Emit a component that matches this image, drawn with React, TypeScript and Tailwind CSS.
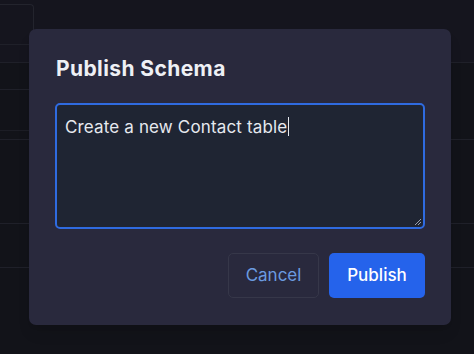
export default function App() {
  return (
    <div
      className="relative h-[354px] w-[474px] overflow-hidden bg-[#121319]"
      style={{ fontFamily: "Inter, 'Noto Sans', sans-serif" }}
    >
      {/* dimmed app behind the dialog */}
      <div className="flex h-full flex-col">
        <div className="relative h-[63px] border-b border-[#1f2029] bg-[#15151e]">
          <div className="h-[30px] w-[34px] mt-[4px] rounded-tr-[4px] border-t border-r border-[#23242d]" />
          <div className="mt-[10px] w-[34px] border-b border-[#1f2029]" />
        </div>
        <div className="h-[27px] w-[34px] border-b border-[#1f2029]" />
        <div className="h-[41px] w-[34px] border-b border-[#1c1d25]" />
        <div className="h-[9px] border-b border-[#1f2029]" />
        <div className="h-[84px] border-b border-[#1f2029]" />
        <div className="h-[44px] border-b border-[#1f2029]" />
        <div className="flex-1" />
      </div>

      {/* dialog */}
      <div className="absolute left-[29px] top-[29px] flex h-[296px] w-[422px] flex-col rounded-[7px] bg-[#29293d] px-[26px] pb-[27px] pt-[26px] shadow-lg">
        <h2 className="ml-px text-[21px] font-bold leading-[28px] tracking-[0.4px] text-[#eef0f5]">
          Publish Schema
        </h2>
        <div className="relative mt-[20px] h-[126px] rounded-[5px] border-2 border-[#2f6be0] bg-[#1f2533] px-[8px] py-[9px]">
          <span className="text-[17px] leading-[24px] tracking-[0.15px] text-[#e6e9ef]">
            Create a new Contact table
            <span className="ml-px inline-block h-[19px] w-px translate-y-[3px] bg-[#e6e9ef]" />
          </span>
          <svg
            className="absolute bottom-[1px] right-[1px]"
            width="8"
            height="8"
            viewBox="0 0 8 8"
          >
            <path d="M7 1 L1 7 M7 4 L4 7" stroke="#9aa0ad" strokeWidth="1" />
          </svg>
        </div>
        <div className="mt-auto flex justify-end gap-[10px]">
          <button className="h-[45px] w-[91px] rounded-[5px] border border-[#363749] text-[17px] text-[#6b9be0]">
            Cancel
          </button>
          <button className="h-[45px] w-[96px] rounded-[5px] bg-[#2563eb] text-[17px] font-medium text-white">
            Publish
          </button>
        </div>
      </div>
    </div>
  );
}
